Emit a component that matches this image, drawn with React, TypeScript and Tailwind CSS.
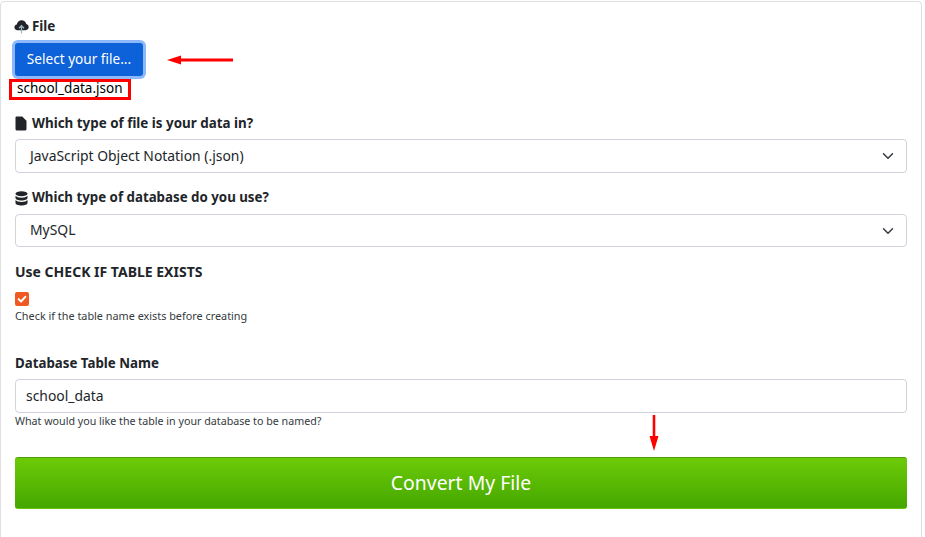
import React from "react";

const font = "font-['Noto_Sans','Open_Sans',sans-serif]";

function Chevron() {
  return (
    <svg className="absolute right-[12px] top-1/2 -translate-y-1/2" width="12" height="12" viewBox="0 0 16 16" fill="none">
      <path d="M2 5l6 6 6-6" stroke="#343a40" strokeWidth="2" strokeLinecap="round" strokeLinejoin="round" />
    </svg>
  );
}

function SelectBox({ text, h }: { text: string; h: string }) {
  return (
    <div className={`relative ${h} w-full rounded-[4px] border border-[#ced4da] bg-white flex items-center pl-[14px] text-[13.9px] text-[#212529]`}>
      <span>{text}</span>
      <Chevron />
    </div>
  );
}

function CloudIcon() {
  return (
    <svg width="15" height="15" viewBox="0 0 15 15" className="shrink-0 -ml-px">
      <path d="M3.6 11.2C1.7 11.2.4 10 .4 8.3c0-1.5 1-2.6 2.4-2.9C3.2 3 5.200 1.200 7.600 1.200c2.300 0 4.200 1.600 4.700 3.800 1.400.3 2.400 1.600 2.400 3.100 0 1.800-1.300 3.100-3.100 3.100Z" fill="#212529" />
      <path d="M7.500 14.600V6.800M5 9.200l2.500-2.500L10 9.200" stroke="#9fb4c4" strokeWidth="1.300" fill="none" />
    </svg>
  );
}

function FileIcon() {
  return (
    <svg width="12" height="15" viewBox="0 0 12 15" className="shrink-0">
      <path d="M1.600.500H7.200L11.500 4.800V13a1.500 1.500 0 0 1-1.500 1.500H2A1.500 1.500 0 0 1 .5 13V1.600A1.100 1.100 0 0 1 1.600.500Z" fill="#212529" />
    </svg>
  );
}

function DbIcon() {
  return (
    <svg width="13" height="15" viewBox="0 0 13 15" className="shrink-0">
      <ellipse cx="6.500" cy="2.800" rx="6" ry="2.500" fill="#212529" />
      <path d="M.5 4.700v2.300c0 1.400 2.700 2.500 6 2.500s6-1.100 6-2.500V4.700c-1 1.300-3.400 2-6 2s-5-.7-6-2Z" fill="#212529" />
      <path d="M.5 9v3c0 1.400 2.700 2.500 6 2.500s6-1.100 6-2.500V9c-1 1.300-3.400 2-6 2s-5-.7-6-2Z" fill="#212529" />
    </svg>
  );
}

export default function App() {
  return (
    <div className={`${font} h-[537px] w-[925px] overflow-hidden bg-white text-[#212529]`}>
      <div className="relative mt-px h-[600px] w-[922px] rounded-[4px] border border-[#dfdfdf] bg-white pl-[14px] pr-[14px] pt-[14px]">
        <div className="flex h-[20px] items-center gap-[3px] text-[13.4px] font-bold leading-[20px]">
          <CloudIcon />
          <span>File</span>
        </div>
        <div className="mt-[7px] flex h-[33px] w-[128px] items-center justify-center rounded-[3px] bg-[#0d62d9] pb-px text-[13.6px] text-white shadow-[0_0_0_3px_#8db8f9]">
          Select your file...
        </div>
        <div className="-ml-[6px] mt-[3px] h-[21px] w-[122px] border-[3px] border-[#ff0000] pl-[5px] text-[13.5px] leading-[13px] text-black">
          school_data.json
        </div>

        <div className="mt-[13px] flex h-[20px] items-center gap-[5px] text-[13.4px] font-bold">
          <FileIcon />
          <span>Which type of file is your data in?</span>
        </div>
        <div className="mt-[6px]">
          <SelectBox text="JavaScript Object Notation (.json)" h="h-[34px]" />
        </div>

        <div className="mt-[15px] flex h-[20px] items-center gap-[4px] text-[13.3px] font-bold">
          <DbIcon />
          <span>Which type of database do you use?</span>
        </div>
        <div className="mt-[6px]">
          <SelectBox text="MySQL" h="h-[33px]" />
        </div>

        <div className="mt-[15px] h-[20px] text-[14px] font-bold leading-[20px]">Use CHECK IF TABLE EXISTS</div>
        <div className="mt-[10px] flex h-[14px] w-[14px] items-center justify-center rounded-[2px] bg-[#f05a22]">
          <svg width="10" height="10" viewBox="0 0 12 12" fill="none">
            <path d="M2 6.200l2.800 2.800L10 3.400" stroke="#fff" strokeWidth="2.400" strokeLinecap="round" strokeLinejoin="round" />
          </svg>
        </div>
        <div className="mt-[2px] h-[16px] text-[10.85px] leading-[16px] text-[#343a40]">Check if the table name exists before creating</div>

        <div className="mt-[29px] h-[20px] text-[13.3px] font-bold leading-[20px]">Database Table Name</div>
        <div className="mt-[6px] flex h-[34px] w-full items-center rounded-[4px] border border-[#ced4da] pl-[10px] text-[13.9px]">school_data</div>
        <div className="h-[16px] text-[10.7px] leading-[16px] text-[#343a40]">What would you like the table in your database to be named?</div>

        <div className="mt-[28px] flex h-[52px] w-full items-center justify-center rounded-[3px] border-b border-t border-b-[#66c706] border-t-[#4f9e08] bg-gradient-to-b from-[#6ccb08] to-[#44a700] text-[19.4px] text-white">
          Convert My File
        </div>

        {/* annotation arrows over the form */}
        <svg className="absolute left-[166px] top-[52px]" width="68" height="12" viewBox="0 0 68 12">
          <path d="M0 6 L14 1.500 L14 4.500 L66 4.500 L66 7.500 L14 7.500 L14 10.500 Z" fill="#ff0000" />
        </svg>
        <svg className="absolute left-[647px] top-[412px]" width="12" height="38" viewBox="0 0 12 38">
          <path d="M4.700 1 H7.300 V22 H10.500 L6 37 L1.500 22 H4.700 Z" fill="#ff0000" />
        </svg>
      </div>
    </div>
  );
}
